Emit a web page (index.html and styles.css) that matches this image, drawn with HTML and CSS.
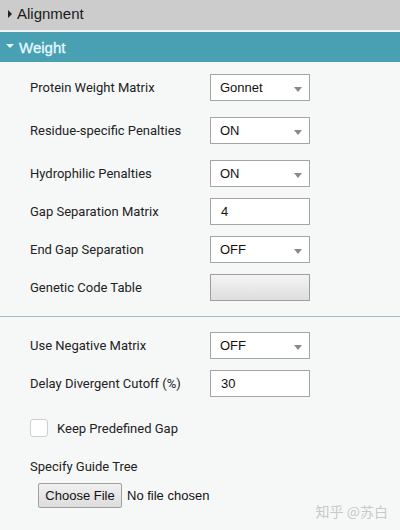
FILE: index.html
```html
<!DOCTYPE html>
<html>
<head>
<meta charset="utf-8">
<link rel="stylesheet" href="styles.css">
</head>
<body>
<div class="hdr hdr-closed"><span class="tri-right"></span><span class="hdr-text">Alignment</span></div>
<div class="hdr hdr-open"><span class="tri-down"></span><span class="hdr-text">Weight</span></div>
<div class="panel">
  <div class="group group-top">
    <div class="row r-sel"><span class="lbl">Protein Weight Matrix</span><div class="sel">Gonnet<span class="caret"></span></div></div>
    <div class="row r-sel"><span class="lbl">Residue-specific Penalties</span><div class="sel">ON<span class="caret"></span></div></div>
    <div class="row r-sel"><span class="lbl">Hydrophilic Penalties</span><div class="sel">ON<span class="caret"></span></div></div>
    <div class="row r-in"><span class="lbl">Gap Separation Matrix</span><div class="inp">4</div></div>
    <div class="row r-in"><span class="lbl">End Gap Separation</span><div class="sel">OFF<span class="caret"></span></div></div>
    <div class="row r-in"><span class="lbl">Genetic Code Table</span><div class="btn"></div></div>
  </div>
  <div class="group group-bottom">
    <div class="row r-in"><span class="lbl">Use Negative Matrix</span><div class="sel">OFF<span class="caret"></span></div></div>
    <div class="row r-in"><span class="lbl">Delay Divergent Cutoff (%)</span><div class="inp">30</div></div>
    <div class="check-row"><span class="chk"></span><span class="lbl">Keep Predefined Gap</span></div>
    <div class="guide"><span class="lbl">Specify Guide Tree</span></div>
    <div class="file-row"><span class="file-btn">Choose File</span><span class="file-text">No file chosen</span></div>
  </div>
  <div class="watermark">知乎 @苏白</div>
</div>
</body>
</html>
```
FILE: styles.css
```css
html, body {
  margin: 0;
  padding: 0;
  background: #f6f8f8;
  width: 400px;
  height: 530px;
  overflow: hidden;
}
.hdr {
  height: 30px;
  display: flex;
  align-items: center;
  font-family: "Liberation Sans", Arial, sans-serif;
  font-size: 15px;
  box-sizing: border-box;
}
.hdr-closed {
  background: #cccccc;
  color: #1a1a1a;
  border-bottom: 2px solid #f4f4f4;
  height: 32px;
  padding-bottom: 3px;
}
.hdr-open {
  background: #48a0b2;
  color: #e6fbff;
  height: 30px;
  font-weight: normal;
  -webkit-text-stroke: 0.3px #e6fbff;
}
.hdr-text { margin-left: 5px; }
.tri-right {
  margin-left: 8px;
  width: 0; height: 0;
  border-top: 4px solid transparent;
  border-bottom: 4px solid transparent;
  border-left: 4px solid #222;
}
.tri-down {
  margin-left: 6px;
  width: 0; height: 0;
  border-left: 4px solid transparent;
  border-right: 4px solid transparent;
  border-top: 4px solid #e6fbff;
  margin-top: -2px;
}
.panel {
  position: relative;
  height: 468px;
}
.group-top {
  padding-top: 12px;
  border-bottom: 1px solid #a9b9c1;
  padding-bottom: 15px;
}
.group-bottom {
  padding-top: 15px;
}
.row {
  display: flex;
  align-items: center;
  padding-left: 30px;
}
.r-sel { height: 27px; margin-bottom: 16px; }
.r-sel:nth-child(3) { margin-bottom: 11px; }
.r-in { height: 27px; margin-bottom: 11px; }
.group-top .r-in:last-child { margin-bottom: 0; }
.lbl {
  font-family: Roboto, "Noto Sans", sans-serif;
  font-size: 13px;
  color: #222;
  width: 180px;
  flex: none;
}
.sel, .inp, .btn {
  width: 100px;
  height: 27px;
  box-sizing: border-box;
  border: 1px solid #a5a5a5;
  background: #fff;
  font-family: "Liberation Sans", Arial, sans-serif;
  font-size: 13px;
  color: #111;
  display: flex;
  align-items: center;
  padding-left: 9px;
  position: relative;
}
.inp { padding-left: 10px; }
.caret {
  position: absolute;
  right: 7px;
  top: 12px;
  width: 0; height: 0;
  border-left: 4px solid transparent;
  border-right: 4px solid transparent;
  border-top: 5px solid #8a8a8a;
}
.btn {
  background: linear-gradient(#f4f4f4, #dedede);
  border-color: #9e9e9e;
}
.check-row {
  display: flex;
  align-items: center;
  padding-left: 30px;
  margin-top: 22px;
  height: 18px;
}
.chk {
  width: 16px;
  height: 16px;
  background: #fff;
  border: 1px solid #cfcfcf;
  border-radius: 3px;
  margin-right: 9px;
  flex: none;
}
.guide {
  padding-left: 30px;
  margin-top: 21px;
  height: 17px;
  display: flex;
  align-items: center;
}
.file-row {
  display: flex;
  align-items: center;
  padding-left: 38px;
  margin-top: 8px;
}
.file-btn {
  box-sizing: border-box;
  width: 84px;
  height: 25px;
  border: 1px solid #a0a0a0;
  border-radius: 2px;
  background: linear-gradient(#f0f0f0, #dddddd);
  font-family: "Liberation Sans", Arial, sans-serif;
  font-size: 13px;
  color: #111;
  display: flex;
  align-items: center;
  justify-content: center;
}
.file-text {
  margin-left: 5px;
  font-family: "Liberation Sans", Arial, sans-serif;
  font-size: 13px;
  color: #111;
}
.watermark {
  position: absolute;
  right: 12px;
  bottom: 9px;
  font-family: "Noto Sans CJK SC", sans-serif;
  font-size: 14px;
  color: #c8c8c8;
}
```
